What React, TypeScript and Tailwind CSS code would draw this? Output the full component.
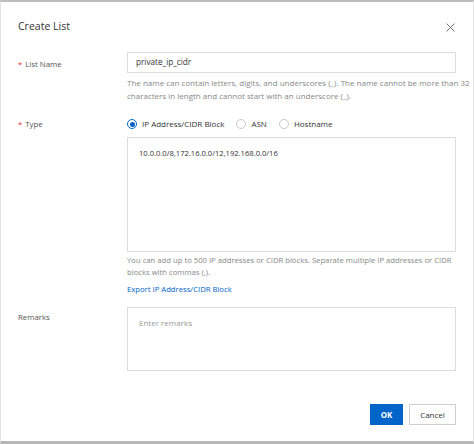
import React from 'react';

const font = { fontFamily: '"Open Sans", "Noto Sans", Arial, sans-serif' };

function Radio({ checked, label }: { checked?: boolean; label: string }) {
  return (
    <label className="flex items-center gap-[5px]">
      <span
        className={`flex h-[10px] w-[10px] items-center justify-center rounded-full border bg-white ${
          checked ? 'border-[#0064c8]' : 'border-[#c8c8c8]'
        }`}
      >
        {checked && <span className="h-[5px] w-[5px] rounded-full bg-[#0064c8]" />}
      </span>
      <span className="text-[8px] text-[#333]">{label}</span>
    </label>
  );
}

function Label({ text, required, className = '' }: { text: string; required?: boolean; className?: string }) {
  return (
    <div className={`w-[109px] shrink-0 text-[7.8px] leading-[12px] text-[#555] ${className}`}>
      {required && <span className="mr-[3px] text-[#e62e2e]">*</span>}
      {text}
    </div>
  );
}

export default function App() {
  return (
    <div
      style={font}
      className="flex h-[444px] w-[474px] flex-col border-x border-t-2 border-b-[3px] border-x-[#e3e3e3] border-t-[#bdbdbd] border-b-[#b5b5b5] bg-white pl-[17px] pr-[17px]"
    >
      {/* header */}
      <div className="mt-[17px] flex h-[16px] items-center justify-between">
        <span className="text-[10.5px] text-[#333]">Create List</span>
        <svg width="9" height="9" viewBox="0 0 9 9" className="mr-[1px]">
          <path d="M0.5 0.5 L8.5 8.5 M8.5 0.5 L0.5 8.5" stroke="#666" strokeWidth="0.9" />
        </svg>
      </div>

      {/* list name */}
      <div className="mt-[17px] flex">
        <Label text="List Name" required className="pt-[6px]" />
        <div className="min-w-0 flex-1">
          <div className="flex h-[21px] items-center border border-[#dcdcdc] px-[8px] text-[8.2px] text-[#333]">
            private_ip_cidr
          </div>
          <div className="mt-[3px] whitespace-nowrap text-[8px] leading-[13px] text-[#888]">
            <div>The name can contain letters, digits, and underscores (_). The name cannot be more than 32</div>
            <div>characters in length and cannot start with an underscore (_).</div>
          </div>
        </div>
      </div>

      {/* type */}
      <div className="mt-[15px] flex">
        <Label text="Type" required className="pt-[1px]" />
        <div className="min-w-0 flex-1">
          <div className="flex h-[14px] items-center gap-[12px]">
            <Radio checked label="IP Address/CIDR Block" />
            <Radio label="ASN" />
            <Radio label="Hostname" />
          </div>
          <div className="mt-[6px] h-[115px] border border-[#dcdcdc] px-[11px] pt-[9px] text-[7.6px] leading-[12px] text-[#333]">
            10.0.0.0/8,172.16.0.0/12,192.168.0.0/16
          </div>
          <div className="mt-[2px] whitespace-nowrap text-[7.7px] leading-[12px] text-[#888]">
            <div>You can add up to 500 IP addresses or CIDR blocks. Separate multiple IP addresses or CIDR</div>
            <div>blocks with commas (,).</div>
          </div>
          <div className="mt-[5px] text-[7.7px] leading-[12px] text-[#0064c8]">Export IP Address/CIDR Block</div>
        </div>
      </div>

      {/* remarks */}
      <div className="mt-[12px] flex">
        <Label text="Remarks" className="pt-[4px]" />
        <div className="h-[64px] min-w-0 flex-1 border border-[#dcdcdc] px-[11px] pt-[9px] text-[8px] leading-[12px] text-[#999]">
          Enter remarks
        </div>
      </div>

      {/* footer */}
      <div className="mt-[33px] flex justify-end gap-[6px]">
        <button className="h-[21px] w-[33px] bg-[#0064c8] text-[8px] font-bold text-white">OK</button>
        <button className="h-[21px] w-[47px] border border-[#d0d0d0] bg-white text-[8px] text-[#333]">
          Cancel
        </button>
      </div>
    </div>
  );
}
